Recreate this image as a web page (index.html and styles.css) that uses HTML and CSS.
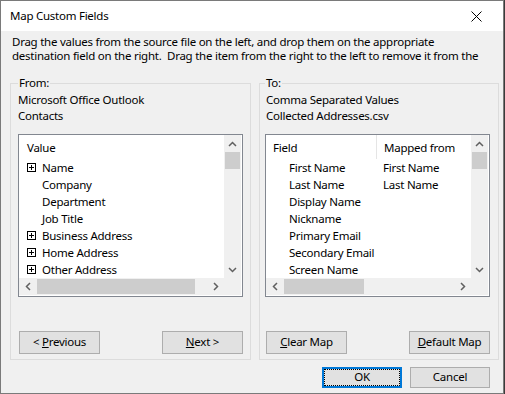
FILE: index.html
```html
<!DOCTYPE html>
<html>
<head>
<meta charset="utf-8">
<title>Map Custom Fields</title>
<link rel="stylesheet" href="styles.css">
</head>
<body>
<div class="window">
  <div class="titlebar">
    <span class="title">Map Custom Fields</span>
    <svg class="close" width="11" height="11" viewBox="0 0 11 11"><path d="M0.5 0.5L10.5 10.5M10.5 0.5L0.5 10.5" stroke="#000" stroke-width="1" fill="none"/></svg>
  </div>
  <div class="content">
    <div class="intro">
      <div class="line">Drag the values from the source file on the left, and drop them on the appropriate</div>
      <div class="line">destination field on the right.&nbsp; Drag the item from the right to the left to remove it from the</div>
    </div>
    <div class="groups">
      <fieldset class="group group-from">
        <legend>From:</legend>
        <div class="src">Microsoft Office Outlook</div>
        <div class="src">Contacts</div>
        <div class="listbox">
          <div class="lb-main">
            <div class="lb-view">
              <div class="lb-header"><span class="hcell">Value</span></div>
              <div class="row"><svg class="exp" width="9" height="9" viewBox="0 0 9 9"><rect x="0.5" y="0.5" width="8" height="8" fill="none" stroke="#000"/><path d="M2 4.5H7M4.5 2V7" stroke="#000"/></svg><span>Name</span></div>
              <div class="row"><span class="nexp"></span><span>Company</span></div>
              <div class="row"><span class="nexp"></span><span>Department</span></div>
              <div class="row"><span class="nexp"></span><span>Job Title</span></div>
              <div class="row"><svg class="exp" width="9" height="9" viewBox="0 0 9 9"><rect x="0.5" y="0.5" width="8" height="8" fill="none" stroke="#000"/><path d="M2 4.5H7M4.5 2V7" stroke="#000"/></svg><span>Business Address</span></div>
              <div class="row"><svg class="exp" width="9" height="9" viewBox="0 0 9 9"><rect x="0.5" y="0.5" width="8" height="8" fill="none" stroke="#000"/><path d="M2 4.5H7M4.5 2V7" stroke="#000"/></svg><span>Home Address</span></div>
              <div class="row"><svg class="exp" width="9" height="9" viewBox="0 0 9 9"><rect x="0.5" y="0.5" width="8" height="8" fill="none" stroke="#000"/><path d="M2 4.5H7M4.5 2V7" stroke="#000"/></svg><span>Other Address</span></div>
            </div>
            <div class="vscroll">
              <div class="sbtn"><svg width="9" height="6" viewBox="0 0 9 6"><polyline points="1,5 4.5,1.5 8,5" fill="none" stroke="#606060" stroke-width="1.5"/></svg></div>
              <div class="vtrack"><div class="vthumb"></div></div>
              <div class="sbtn"><svg width="9" height="6" viewBox="0 0 9 6"><polyline points="1,1 4.5,4.5 8,1" fill="none" stroke="#606060" stroke-width="1.5"/></svg></div>
            </div>
          </div>
          <div class="lb-bottom">
            <div class="hscroll">
              <div class="sbtn"><svg width="6" height="9" viewBox="0 0 6 9"><polyline points="5,1 1.5,4.5 5,8" fill="none" stroke="#606060" stroke-width="1.5"/></svg></div>
              <div class="htrack"><div class="hthumb hthumb-from"></div></div>
              <div class="sbtn"><svg width="6" height="9" viewBox="0 0 6 9"><polyline points="1,1 4.5,4.5 1,8" fill="none" stroke="#606060" stroke-width="1.5"/></svg></div>
            </div>
            <div class="corner"></div>
          </div>
        </div>
        <div class="btnrow">
          <button class="btn">&lt; <u>P</u>revious</button>
          <button class="btn"><u>N</u>ext &gt;</button>
        </div>
      </fieldset>
      <fieldset class="group group-to">
        <legend>To:</legend>
        <div class="src">Comma Separated Values</div>
        <div class="src">Collected Addresses.csv</div>
        <div class="listbox">
          <div class="lb-main">
            <div class="lb-view">
              <div class="lb-header grid2"><span class="hcell c1">Field</span><span class="hcell c2">Mapped from</span></div>
              <div class="row grid2"><span class="c1">First Name</span><span class="c2">First Name</span></div>
              <div class="row grid2"><span class="c1">Last Name</span><span class="c2">Last Name</span></div>
              <div class="row grid2"><span class="c1">Display Name</span><span class="c2"></span></div>
              <div class="row grid2"><span class="c1">Nickname</span><span class="c2"></span></div>
              <div class="row grid2"><span class="c1">Primary Email</span><span class="c2"></span></div>
              <div class="row grid2"><span class="c1">Secondary Email</span><span class="c2"></span></div>
              <div class="row grid2"><span class="c1">Screen Name</span><span class="c2"></span></div>
            </div>
            <div class="vscroll">
              <div class="sbtn"><svg width="9" height="6" viewBox="0 0 9 6"><polyline points="1,5 4.5,1.5 8,5" fill="none" stroke="#606060" stroke-width="1.5"/></svg></div>
              <div class="vtrack"><div class="vthumb"></div></div>
              <div class="sbtn"><svg width="9" height="6" viewBox="0 0 9 6"><polyline points="1,1 4.5,4.5 8,1" fill="none" stroke="#606060" stroke-width="1.5"/></svg></div>
            </div>
          </div>
          <div class="lb-bottom">
            <div class="hscroll">
              <div class="sbtn"><svg width="6" height="9" viewBox="0 0 6 9"><polyline points="5,1 1.5,4.5 5,8" fill="none" stroke="#606060" stroke-width="1.5"/></svg></div>
              <div class="htrack"><div class="hthumb hthumb-to"></div></div>
              <div class="sbtn"><svg width="6" height="9" viewBox="0 0 6 9"><polyline points="1,1 4.5,4.5 1,8" fill="none" stroke="#606060" stroke-width="1.5"/></svg></div>
            </div>
            <div class="corner"></div>
          </div>
        </div>
        <div class="btnrow">
          <button class="btn"><u>C</u>lear Map</button>
          <button class="btn"><u>D</u>efault Map</button>
        </div>
      </fieldset>
    </div>
    <div class="footer">
      <button class="btn btn-sm btn-default">OK</button>
      <button class="btn btn-sm">Cancel</button>
    </div>
  </div>
</div>
</body>
</html>
```
FILE: styles.css
```css
* { box-sizing: border-box; }
html, body { margin: 0; padding: 0; }
body {
  width: 505px;
  height: 394px;
  overflow: hidden;
  background: #3b3b3b;
  font-family: "Noto Sans", "Open Sans", sans-serif;
  font-size: 11.5px;
  letter-spacing: -0.25px;
  color: #000;
}
.window {
  width: 504px;
  height: 394px;
  border: 1px solid #7a7a7a;
  background: #f0f0f0;
  display: flex;
  flex-direction: column;
}
.titlebar {
  flex: none;
  height: 30px;
  background: #fff;
  display: flex;
  align-items: center;
  justify-content: space-between;
  padding: 0 21px 0 9px;
}
.title { line-height: 16px; }
.close { display: block; margin-top: 0; }
.content {
  flex: 1;
  display: flex;
  flex-direction: column;
  padding: 4px 4px 0 9px;
}
.intro {
  line-height: 14px;
  padding-left: 2px;
  white-space: nowrap;
  overflow: hidden;
}
.groups {
  margin-top: 13px;
  display: flex;
  gap: 8px;
}
.group {
  margin: 0;
  min-width: 0;
  border: 1px solid #dcdcdc;
  padding: 2px 7px 5px 7px;
}
.group-from { width: 241px; }
.group-to { width: 240px; padding: 2px 8px 5px 5px; }
.group legend {
  padding: 0 1px;
  line-height: 14px;
}
.src { line-height: 16px; white-space: nowrap; }
.group-to .src { padding-left: 1px; }
.listbox {
  margin-top: 10px;
  width: 225px;
  height: 163px;
  border: 1px solid #828790;
  padding: 0 1px 1px 0;
  background: #fff;
  display: flex;
  flex-direction: column;
}
.lb-main {
  flex: 1;
  display: flex;
  min-height: 0;
}
.lb-view {
  flex: 1;
  overflow: hidden;
  white-space: nowrap;
}
.lb-header {
  height: 24px;
  line-height: 16px;
  padding: 5px 0 3px 8px;
}
.row {
  height: 17px;
  line-height: 17px;
  display: flex;
  align-items: center;
  padding-left: 8px;
}
.exp { display: block; flex: none; margin-right: 6px; }
.nexp { display: block; flex: none; width: 9px; margin-right: 6px; }
.grid2 {
  display: grid;
  grid-template-columns: 111px 1fr;
  padding-left: 0;
}
.lb-header.grid2 { padding: 0; }
.lb-header .c1 {
  border-right: 1px solid #e5e5e5;
  padding: 5px 0 3px 7px;
  height: 24px;
}
.lb-header .c2 { padding: 5px 0 3px 7px; height: 24px; }
.row .c1 { padding-left: 23px; }
.row .c2 { padding-left: 6px; }
.vscroll {
  width: 17px;
  flex: none;
  background: #f0f0f0;
  display: flex;
  flex-direction: column;
}
.sbtn {
  width: 17px;
  height: 17px;
  flex: none;
  display: flex;
  align-items: center;
  justify-content: center;
}
.sbtn svg { display: block; }
.vtrack { flex: 1; }
.vthumb {
  height: 17px;
  margin: 0 1px;
  background: #cdcdcd;
}
.lb-bottom {
  height: 17px;
  flex: none;
  display: flex;
}
.hscroll {
  flex: 1;
  display: flex;
  background: #f0f0f0;
}
.htrack { flex: 1; padding: 1px 0; }
.hthumb {
  height: 15px;
  margin-left: 1px;
  background: #cdcdcd;
}
.hthumb-from { width: 158px; }
.hthumb-to { width: 80px; }
.corner { width: 17px; flex: none; background: #f0f0f0; }
.btnrow {
  margin-top: 34px;
  display: flex;
  justify-content: space-between;
  padding-left: 1px;
}
.btn {
  width: 81px;
  height: 23px;
  margin: 0;
  padding: 0 0 1px 0;
  background: #e1e1e1;
  border: 1px solid #adadad;
  border-radius: 0;
  font-family: inherit;
  font-size: inherit;
  letter-spacing: inherit;
  line-height: 16px;
  color: #000;
}
.footer {
  margin-top: 7px;
  display: flex;
  justify-content: flex-end;
  gap: 8px;
  padding-right: 9px;
}
.btn-sm { width: 80px; height: 21px; }
.btn-default {
  border-color: #0078d7;
  box-shadow: inset 0 0 0 1px #0078d7;
  outline: 1px dotted #000;
  outline-offset: -3px;
}
```
